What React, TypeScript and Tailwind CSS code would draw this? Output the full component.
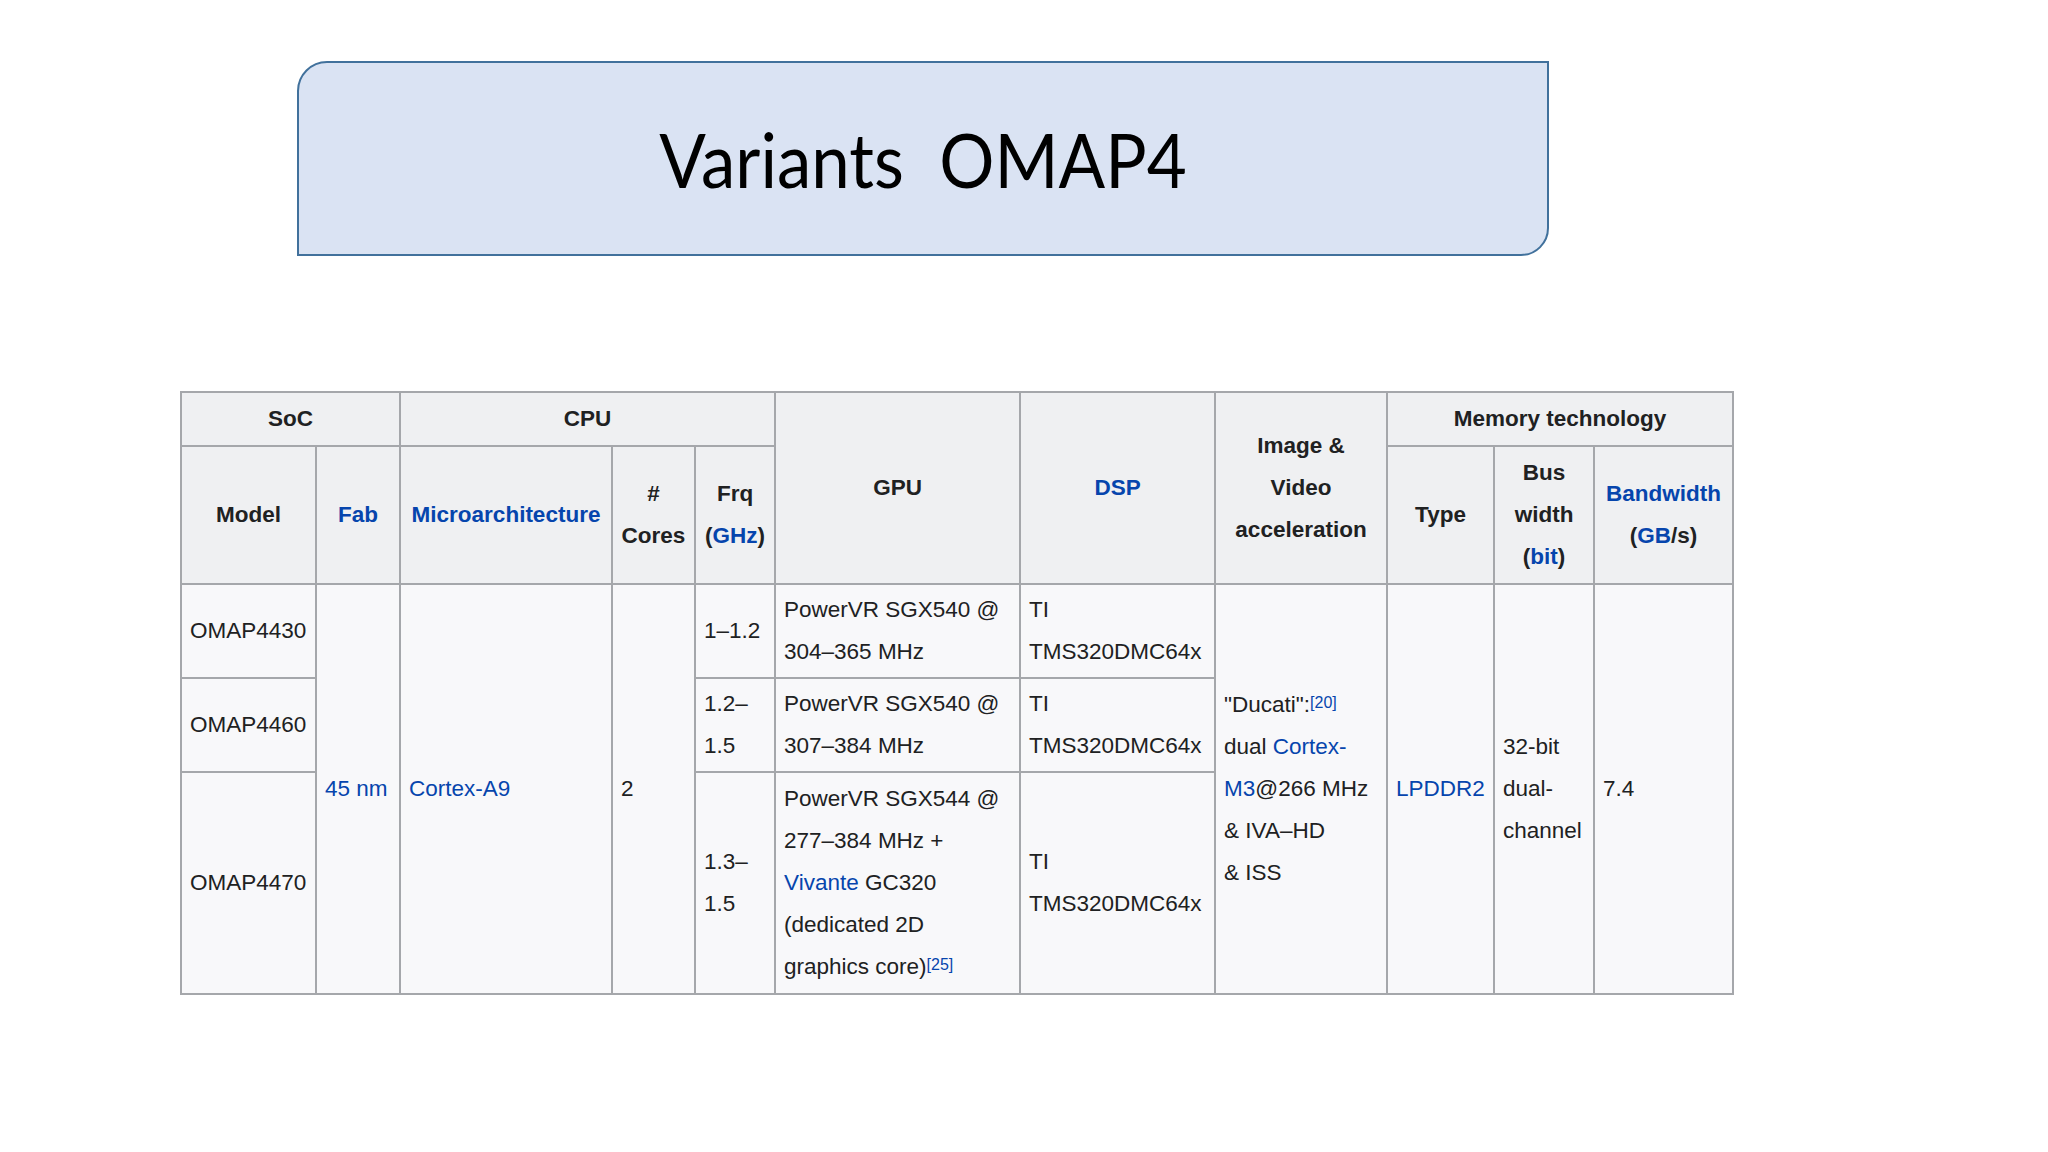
import React from "react";

const L = "text-[#0645ad]";

function Sup({ n }: { n: string }) {
  return <sup className={`${L} text-[16px] relative -top-[4px]`}>[{n}]</sup>;
}

export default function App() {
  const th = "border-2 border-[#a5a7ab] bg-[#eff0f2] font-bold text-center align-middle px-[8px] py-[5px]";
  const td = "border-2 border-[#a5a7ab] bg-[#f8f8fa] text-left align-middle px-[8px] py-[4px]";
  return (
    <div className="w-[2048px] h-[1152px] bg-white flex flex-col overflow-hidden">
      <div className="ml-[297px] mt-[61px] w-[1252px] h-[195px] bg-[#dae3f3] border-2 border-[#41719c] rounded-tl-[30px] rounded-br-[28px] flex items-center justify-center">
        <span className="text-[69px] leading-none text-black scale-y-[1.1] whitespace-pre" style={{ fontFamily: "Lato, 'Open Sans', sans-serif" }}>
          Variants  OMAP4
        </span>
      </div>
      <div className="ml-[180px] mt-[135px]">
        <table
          className="border-collapse table-fixed w-[1552px] text-[22.5px] leading-[42px] text-[#202122]"
          style={{ fontFamily: "'Liberation Sans', Arial, sans-serif" }}
        >
          <colgroup>
            <col className="w-[135px]" />
            <col className="w-[84px]" />
            <col className="w-[212px]" />
            <col className="w-[83px]" />
            <col className="w-[80px]" />
            <col className="w-[245px]" />
            <col className="w-[195px]" />
            <col className="w-[172px]" />
            <col className="w-[107px]" />
            <col className="w-[100px]" />
            <col className="w-[139px]" />
          </colgroup>
          <thead>
            <tr className="h-[53px]">
              <th className={th} colSpan={2}>SoC</th>
              <th className={th} colSpan={3}>CPU</th>
              <th className={th} rowSpan={2}>GPU</th>
              <th className={th} rowSpan={2}><span className={L}>DSP</span></th>
              <th className={th} rowSpan={2}>Image &amp;<br />Video<br />acceleration</th>
              <th className={th} colSpan={3}>Memory technology</th>
            </tr>
            <tr className="h-[134px]">
              <th className={th}>Model</th>
              <th className={th}><span className={L}>Fab</span></th>
              <th className={th}><span className={L}>Microarchitecture</span></th>
              <th className={th}>#<br />Cores</th>
              <th className={th}>Frq<br />(<span className={L}>GHz</span>)</th>
              <th className={th}>Type</th>
              <th className={th}>Bus<br />width<br />(<span className={L}>bit</span>)</th>
              <th className={th}><span className={L}>Bandwidth</span><br />(<span className={L}>GB</span>/s)</th>
            </tr>
          </thead>
          <tbody>
            <tr className="h-[94px]">
              <td className={td}>OMAP4430</td>
              <td className={td} rowSpan={3}><span className={L}>45 nm</span></td>
              <td className={td} rowSpan={3}><span className={L}>Cortex-A9</span></td>
              <td className={td} rowSpan={3}>2</td>
              <td className={td}>1–1.2</td>
              <td className={`${td} whitespace-nowrap`}>PowerVR SGX540 @<br />304–365 MHz</td>
              <td className={`${td} whitespace-nowrap`}>TI<br />TMS320DMC64x</td>
              <td className={`${td} whitespace-nowrap`} rowSpan={3}>
                "Ducati":<Sup n="20" /><br />
                dual <span className={L}>Cortex-</span><br />
                <span className={L}>M3</span>@266 MHz<br />
                &amp; IVA–HD<br />
                &amp; ISS
              </td>
              <td className={td} rowSpan={3}><span className={L}>LPDDR2</span></td>
              <td className={`${td} whitespace-nowrap`} rowSpan={3}>32-bit<br />dual-<br />channel</td>
              <td className={td} rowSpan={3}>7.4</td>
            </tr>
            <tr className="h-[92px]">
              <td className={td}>OMAP4460</td>
              <td className={td}>1.2–<br />1.5</td>
              <td className={`${td} whitespace-nowrap`}>PowerVR SGX540 @<br />307–384 MHz</td>
              <td className={`${td} whitespace-nowrap`}>TI<br />TMS320DMC64x</td>
            </tr>
            <tr className="h-[222px]">
              <td className={td}>OMAP4470</td>
              <td className={td}>1.3–<br />1.5</td>
              <td className={`${td} whitespace-nowrap`}>
                PowerVR SGX544 @<br />
                277–384 MHz +<br />
                <span className={L}>Vivante</span> GC320<br />
                (dedicated 2D<br />
                graphics core)<Sup n="25" />
              </td>
              <td className={`${td} whitespace-nowrap`}>TI<br />TMS320DMC64x</td>
            </tr>
          </tbody>
        </table>
      </div>
    </div>
  );
}
